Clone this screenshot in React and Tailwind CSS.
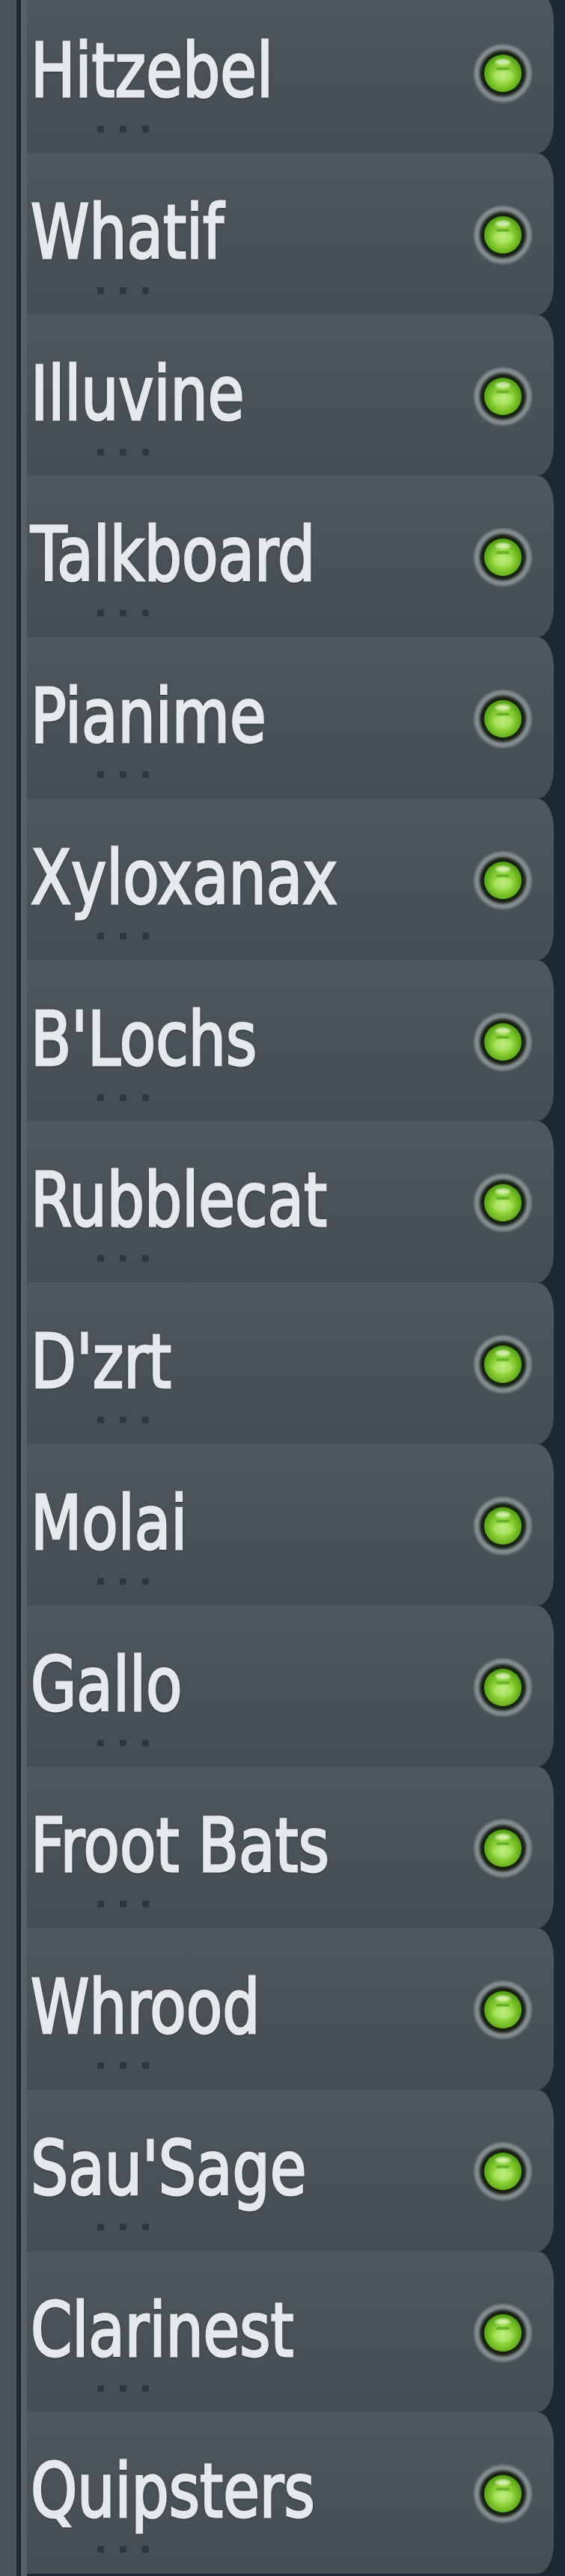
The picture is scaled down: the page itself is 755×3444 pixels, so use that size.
import React from "react";

const channels = [
  "Hitzebel",
  "Whatif",
  "Illuvine",
  "Talkboard",
  "Pianime",
  "Xyloxanax",
  "B'Lochs",
  "Rubblecat",
  "D'zrt",
  "Molai",
  "Gallo",
  "Froot Bats",
  "Whrood",
  "Sau'Sage",
  "Clarinest",
  "Quipsters",
];

// green "mute" led on the right of each channel
function Led() {
  return (
    <svg viewBox="-42 -42 84 84" className="h-[84px] w-[84px]">
      <defs>
        <radialGradient id="ledFill" cx="50%" cy="55%" r="55%">
          <stop offset="0%" stopColor="#b6ec70" />
          <stop offset="55%" stopColor="#86cc30" />
          <stop offset="100%" stopColor="#4e9a12" />
        </radialGradient>
        <filter id="soft" x="-20%" y="-20%" width="140%" height="140%">
          <feGaussianBlur stdDeviation="1.6" />
        </filter>
      </defs>
      <circle r="35" fill="none" stroke="#858c90" strokeWidth="7" filter="url(#soft)" />
      <circle r="30" fill="#18200f" filter="url(#soft)" />
      <circle r="25" fill="url(#ledFill)" />
      <ellipse cx="0" cy="-15" rx="10" ry="4" fill="#eaffd0" opacity="0.75" filter="url(#soft)" />
      <rect x="-9" y="-8" width="18" height="4" rx="2" fill="#5fa622" opacity="0.8" />
      <ellipse cx="0" cy="4" rx="14" ry="8" fill="#c8f590" opacity="0.35" filter="url(#soft)" />
    </svg>
  );
}

function ChannelRow({ name }) {
  return (
    <div className="flex h-[215.75px] rounded-r-[22px_40px] bg-linear-to-b from-[#50575d] via-[#4a5157] to-[#464d53] pl-[5px] pr-[26px]">
      <div className="flex-1 pt-[56px]">
        <div className="origin-left scale-x-[0.8] whitespace-nowrap font-['DejaVu_Sans',sans-serif] text-[99px] font-normal leading-[99px] text-[#e4e9ec] [-webkit-text-stroke:3px_#e4e9ec] [text-shadow:0_0_4px_#22282d,0_2px_2px_#22282d]">
          {name}
        </div>
        <div className="ml-[89px] mt-[24px] flex gap-[21px]">
          <span className="h-[9px] w-[9px] rounded-[2px] bg-[#30373c]" />
          <span className="h-[9px] w-[9px] rounded-[2px] bg-[#30373c]" />
          <span className="h-[9px] w-[9px] rounded-[2px] bg-[#30373c]" />
        </div>
      </div>
      <div className="mt-[67px]">
        <Led />
      </div>
    </div>
  );
}

export default function App() {
  return (
    <div className="flex h-[3444px] w-[755px] overflow-hidden bg-[#1d2932]">
      <div className="w-[22px] shrink-0 bg-[#4b5359]" />
      <div className="w-[6px] shrink-0 bg-[#1f2831]" />
      <div className="w-[8px] shrink-0 bg-[#586065]" />
      <div className="-mt-[11px] flex-1 pr-[15px]">
        {channels.map((name) => (
          <ChannelRow key={name} name={name} />
        ))}
      </div>
    </div>
  );
}
